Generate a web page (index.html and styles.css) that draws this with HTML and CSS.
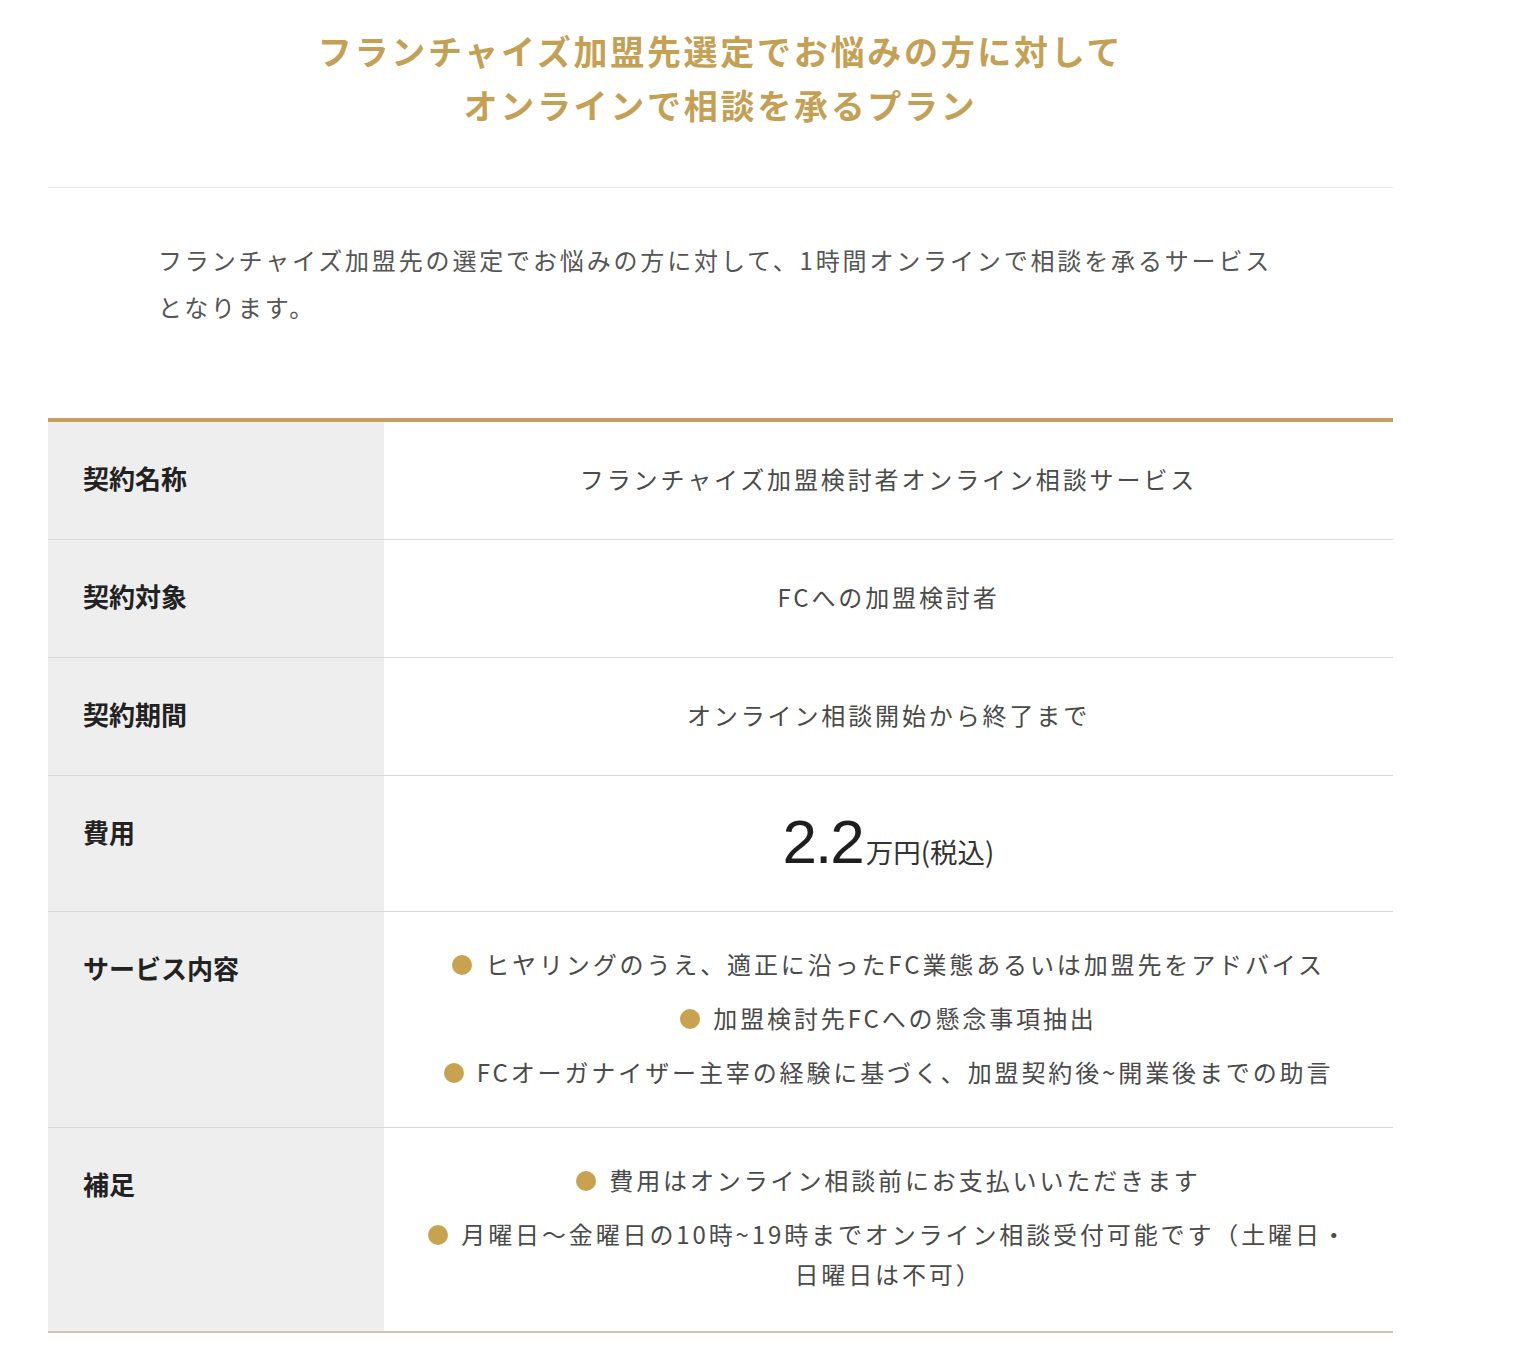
FILE: index.html
```html
<!DOCTYPE html>
<html lang="ja">
<head>
<meta charset="utf-8">
<title>オンライン相談プラン</title>
<link rel="stylesheet" href="styles.css">
</head>
<body>
<div class="page">
  <h2 class="title">フランチャイズ加盟先選定でお悩みの方に対して<br>オンラインで相談を承るプラン</h2>
  <hr class="divider">
  <p class="lead">フランチャイズ加盟先の選定でお悩みの方に対して、1時間オンラインで相談を承るサービスとなります。</p>

  <div class="spec">
    <div class="row">
      <div class="th">契約名称</div>
      <div class="td">フランチャイズ加盟検討者オンライン相談サービス</div>
    </div>
    <div class="row">
      <div class="th">契約対象</div>
      <div class="td">FCへの加盟検討者</div>
    </div>
    <div class="row">
      <div class="th">契約期間</div>
      <div class="td">オンライン相談開始から終了まで</div>
    </div>
    <div class="row">
      <div class="th">費用</div>
      <div class="td td-fee"><span class="fee-num">2.2</span><span class="fee-unit">万円(税込)</span></div>
    </div>
    <div class="row">
      <div class="th">サービス内容</div>
      <div class="td td-list">
        <ul class="dots">
          <li><span class="dot"></span>ヒヤリングのうえ、適正に沿ったFC業態あるいは加盟先をアドバイス</li>
          <li><span class="dot"></span>加盟検討先FCへの懸念事項抽出</li>
          <li><span class="dot"></span>FCオーガナイザー主宰の経験に基づく、加盟契約後~開業後までの助言</li>
        </ul>
      </div>
    </div>
    <div class="row row-last">
      <div class="th">補足</div>
      <div class="td td-list">
        <ul class="dots">
          <li><span class="dot"></span>費用はオンライン相談前にお支払いいただきます</li>
          <li><span class="dot"></span>月曜日～金曜日の10時~19時までオンライン相談受付可能です（土曜日・日曜日は不可）</li>
        </ul>
      </div>
    </div>
  </div>
</div>
</body>
</html>
```

FILE: styles.css
```css
html, body {
  margin: 0;
  padding: 0;
  background: #ffffff;
}

body {
  font-family: "Noto Sans CJK JP", "Noto Sans", sans-serif;
  color: #4a4a4a;
}

.page {
  width: 1345px;
  margin-left: 48px;
  padding-top: 24px;
}

.title {
  margin: 0;
  text-align: center;
  color: #c4a055;
  font-size: 34px;
  font-weight: 700;
  line-height: 54px;
  letter-spacing: 0.08em;
}

.divider {
  margin: 55px 0 0;
  border: 0;
  border-top: 1px solid #e8e8e8;
  height: 0;
}

.lead {
  margin: 48px 0 0;
  padding: 0 100px 0 110px;
  font-size: 24px;
  line-height: 47px;
  letter-spacing: 2.85px;
  color: #555555;
}

.spec {
  margin-top: 88px;
  border-top: 4px solid #c4a05a;
}

.row {
  display: grid;
  grid-template-columns: 336px 1fr;
  border-bottom: 1px solid #dadada;
}

.row-last {
  border-bottom: 2px solid #cfc7ad;
}

.th {
  background: #eeeeee;
  padding: 36px 20px 38px 35px;
  font-size: 26px;
  font-weight: 700;
  line-height: 40px;
  color: #222222;
}

.td {
  padding: 37px 40px 40px;
  text-align: center;
  font-size: 24px;
  line-height: 40px;
  letter-spacing: 0.12em;
  color: #4a4a4a;
}

.td-fee {
  display: flex;
  justify-content: center;
  align-items: baseline;
  padding-top: 36px;
  letter-spacing: 0;
}

.fee-num {
  font-size: 62px;
  line-height: 59px;
  letter-spacing: -2px;
  color: #1e1e1e;
  font-family: "Liberation Sans", "Noto Sans", sans-serif;
}

.fee-unit {
  font-size: 27.5px;
  line-height: 1;
  color: #333333;
  margin-left: 3px;
}

.td-list {
  padding-top: 32px;
  padding-bottom: 35px;
}

.row-last .td-list {
  padding-bottom: 37px;
}

.dots {
  list-style: none;
  margin: 0;
  padding: 0;
  display: flex;
  flex-direction: column;
  gap: 14px;
}

.dots li {
  line-height: 40px;
}

.dot {
  display: inline-block;
  width: 20px;
  height: 20px;
  border-radius: 50%;
  background: #c9a250;
  margin-right: 13px;
  vertical-align: -1px;
}
```
